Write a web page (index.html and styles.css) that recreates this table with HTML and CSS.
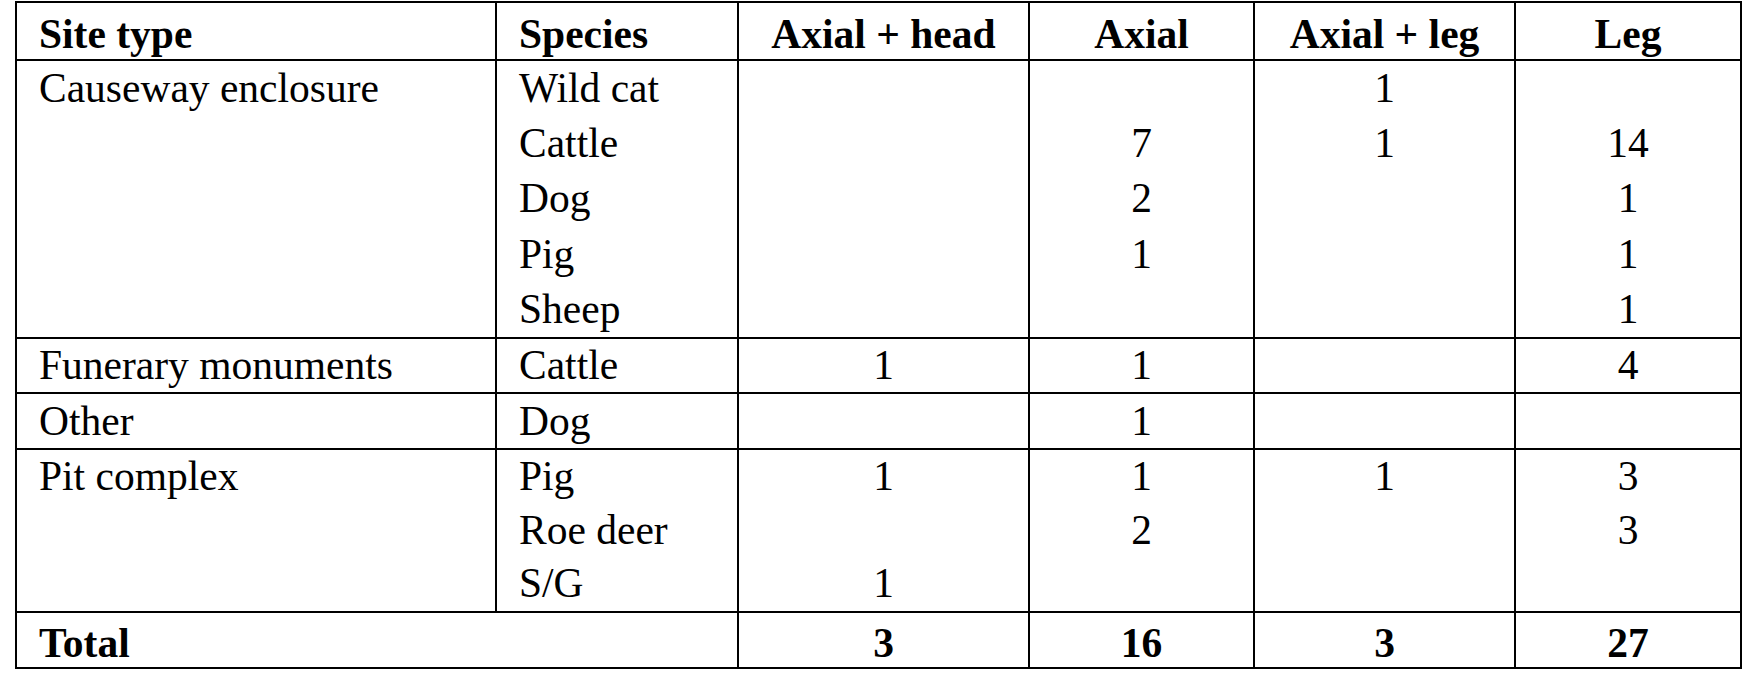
FILE: index.html
```html
<!DOCTYPE html>
<html lang="en">
<head>
<meta charset="utf-8">
<title>Site type by species</title>
<link rel="stylesheet" href="styles.css">
</head>
<body>
<table class="data">
  <colgroup>
    <col class="c-site">
    <col class="c-species">
    <col class="c-ah">
    <col class="c-a">
    <col class="c-al">
    <col class="c-l">
  </colgroup>
  <thead>
    <tr>
      <th class="left">Site type</th>
      <th class="left">Species</th>
      <th>Axial + head</th>
      <th>Axial</th>
      <th>Axial + leg</th>
      <th>Leg</th>
    </tr>
  </thead>
  <tbody>
    <tr class="group">
      <td class="left">Causeway enclosure</td><td class="left">Wild cat</td><td></td><td></td><td>1</td><td></td>
    </tr>
    <tr>
      <td></td><td class="left">Cattle</td><td></td><td>7</td><td>1</td><td>14</td>
    </tr>
    <tr>
      <td></td><td class="left">Dog</td><td></td><td>2</td><td></td><td>1</td>
    </tr>
    <tr>
      <td></td><td class="left">Pig</td><td></td><td>1</td><td></td><td>1</td>
    </tr>
    <tr>
      <td></td><td class="left">Sheep</td><td></td><td></td><td></td><td>1</td>
    </tr>
    <tr class="group short">
      <td class="left">Funerary monuments</td><td class="left">Cattle</td><td>1</td><td>1</td><td></td><td>4</td>
    </tr>
    <tr class="group mid">
      <td class="left">Other</td><td class="left">Dog</td><td></td><td>1</td><td></td><td></td>
    </tr>
    <tr class="group tight">
      <td class="left">Pit complex</td><td class="left">Pig</td><td>1</td><td>1</td><td>1</td><td>3</td>
    </tr>
    <tr class="tight">
      <td></td><td class="left">Roe deer</td><td></td><td>2</td><td></td><td>3</td>
    </tr>
    <tr class="tight">
      <td></td><td class="left">S/G</td><td>1</td><td></td><td></td><td></td>
    </tr>
    <tr class="group total">
      <td class="left" colspan="2">Total</td><td>3</td><td>16</td><td>3</td><td>27</td>
    </tr>
  </tbody>
</table>
</body>
</html>
```

FILE: styles.css
```css
html, body {
  margin: 0;
  padding: 0;
  background: #ffffff;
}

body {
  padding: 1px 0 0 15px;
  font-family: "Liberation Serif", "Times New Roman", Times, serif;
  font-size: 41.5px;
  color: #000000;
}

.data {
  border-collapse: collapse;
  table-layout: fixed;
  width: 1727px;
  border: 2px solid #000;
}

.c-site { width: 480px; }
.c-species { width: 242px; }
.c-ah { width: 291px; }
.c-a { width: 225px; }
.c-al { width: 261px; }
.c-l { width: 226px; }

.data th,
.data td {
  border-left: 2px solid #000;
  border-right: 2px solid #000;
  padding: 0 10px;
  text-align: center;
  white-space: nowrap;
  vertical-align: top;
}

.data th {
  font-weight: bold;
  line-height: 50px;
  padding-top: 6px;
  border-bottom: 2px solid #000;
}

.data td {
  font-weight: normal;
  line-height: 55.2px;
}

.data .left {
  text-align: left;
  padding-left: 22px;
}

.data tr.group td {
  border-top: 2px solid #000;
}

.data tr.short td {
  line-height: 53px;
}

.data tr.mid td {
  line-height: 54px;
}

.data tr.tight td {
  line-height: 53.7px;
}

.data tr.total td {
  font-weight: bold;
  line-height: 47px;
  padding-top: 7px;
}
```
